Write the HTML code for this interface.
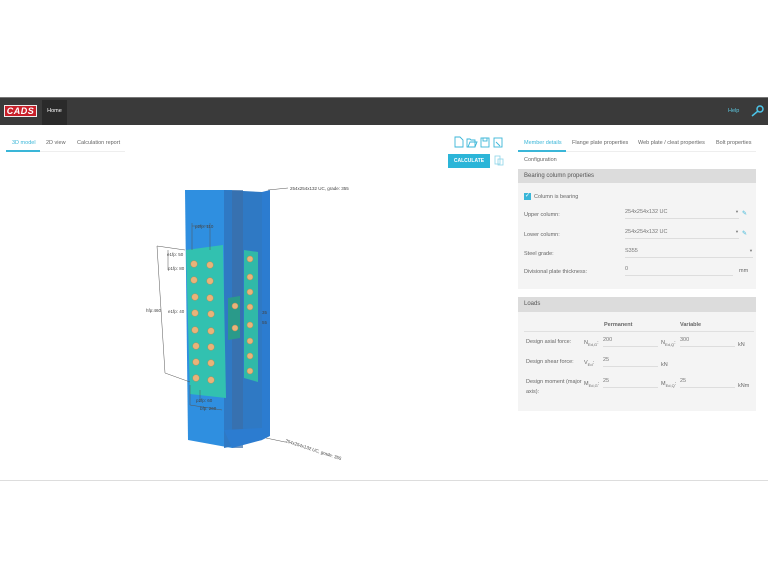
<!DOCTYPE html>
<html><head><meta charset="utf-8"><style>
*{margin:0;padding:0;box-sizing:border-box}
body{width:768px;height:578px;background:#fff;font-family:"Liberation Sans",sans-serif;position:relative;overflow:hidden;color:#555}
.a{position:absolute;white-space:nowrap}
.nav{position:absolute;left:0;top:97px;width:768px;height:28px;background:#3a3a3a;border-top:1px solid #777}
.t{font-size:5.5px;color:#666}
.inp{position:absolute;border-bottom:1px solid #ddd;font-size:5.5px;color:#777}
</style></head><body>
<div class="nav">
 <div class="a" style="left:4px;top:7px;width:33px;height:12px;background:#c8202a;border:1px solid #eee;color:#fff;font-weight:bold;font-style:italic;font-size:9px;line-height:10px;text-align:center;letter-spacing:0.5px">CADS</div>
 <div class="a" style="left:42px;top:2px;width:25px;height:25px;background:#2a2a2a;color:#fff;font-size:5.5px;line-height:22px;text-align:center">Home</div>
 <div class="a" style="left:728px;top:10px;color:#5cc8e0;font-size:5.5px">Help</div>
 <svg class="a" style="left:750px;top:7px" width="14" height="12"><circle cx="10" cy="4" r="3" fill="none" stroke="#4cc4e8" stroke-width="1.5"/><line x1="8" y1="6" x2="2" y2="11" stroke="#4cc4e8" stroke-width="1.5"/></svg>
</div>
<div class="a t" style="left:12px;top:140px;color:#3ab6d8">3D model</div>
<div class="a t" style="left:46px;top:140px">2D view</div>
<div class="a t" style="left:77px;top:140px">Calculation report</div>
<div class="a" style="left:6px;top:151px;width:119px;height:1px;background:#eee"></div>
<div class="a" style="left:6px;top:150px;width:34px;height:2px;background:#3ab6d8"></div>
<svg class="a" style="left:454px;top:136px" width="52" height="12" fill="none" stroke="#3ab6d8" stroke-width="0.9"><path d="M1 1h5l3 3v7H1z"/><path d="M13 3h3l1 1h4v7h-8z M14 11l2-5h7l-2 5"/><rect x="27" y="2" width="8" height="9"/><rect x="29" y="2" width="4" height="3"/><rect x="40" y="2" width="8" height="9"/><path d="M42 6l4 4"/></svg>
<div class="a" style="left:448px;top:154px;width:42px;height:14px;background:#2bb5d8;color:#fff;font-size:5px;font-weight:bold;line-height:14px;text-align:center">CALCULATE</div>
<svg class="a" style="left:494px;top:155px" width="10" height="11" fill="none" stroke="#8cd4e8" stroke-width="0.8"><rect x="1" y="1" width="5" height="8"/><rect x="4" y="4" width="5" height="6"/></svg>

<!-- 3D model -->
<svg class="a" style="left:130px;top:180px" width="250" height="290">
 <g transform="translate(-130,-180)">
 <polygon points="185,190 232,190 232,448 188,440" fill="#2f8fe0"/>
 <polygon points="224,190 262,192 262,440 224,448" fill="#2f79c4"/>
 <polygon points="232,190 243,190 243,448 232,448" fill="#3a6ea8" opacity="0.7"/>
 <polygon points="262,192 270,190 270,436 262,440" fill="#2c7cd0"/>
 <polygon points="224,430 262,428 262,440 232,448" fill="#2c7cd0"/>
 <polygon points="186,250 223,245 226,398 190,394" fill="#32c1b0"/>
 <polygon points="244,250 258,252 258,382 244,378" fill="#30b9a8"/>
 <polygon points="228,298 240,296 240,338 228,340" fill="#2a9a8a"/>
 <g fill="#e8b37a" stroke="#c68a50" stroke-width="0.5">
 <circle cx="194" cy="264" r="3.3"/><circle cx="210" cy="265" r="3.3"/>
 <circle cx="194" cy="280" r="3.3"/><circle cx="210" cy="281" r="3.3"/>
 <circle cx="195" cy="297" r="3.3"/><circle cx="210" cy="298" r="3.3"/>
 <circle cx="195" cy="313" r="3.3"/><circle cx="211" cy="314" r="3.3"/>
 <circle cx="195" cy="330" r="3.3"/><circle cx="211" cy="331" r="3.3"/>
 <circle cx="196" cy="346" r="3.3"/><circle cx="211" cy="347" r="3.3"/>
 <circle cx="196" cy="362" r="3.3"/><circle cx="211" cy="363" r="3.3"/>
 <circle cx="196" cy="378" r="3.3"/><circle cx="211" cy="380" r="3.3"/>
 <circle cx="250" cy="259" r="3"/><circle cx="250" cy="277" r="3"/><circle cx="250" cy="292" r="3"/><circle cx="250" cy="307" r="3"/>
 <circle cx="250" cy="325" r="3"/><circle cx="250" cy="341" r="3"/><circle cx="250" cy="356" r="3"/><circle cx="250" cy="371" r="3"/>
 <circle cx="235" cy="306" r="3"/><circle cx="235" cy="328" r="3"/>
 </g>
 <g stroke="#555" stroke-width="0.5" fill="none">
 <path d="M157 246L185 250M157 246L165 373L190 382M168 250V270M192 223V250M210 223V250M192 226H210"/>
 <path d="M190 385V405L222 410M200 390V402M268 190L288 188M266 438L285 442"/>
 </g>
 <g font-size="4.5" fill="#444" font-family="Liberation Sans">
 <text x="290" y="190">254x254x132 UC, grade: 355</text>
 <text x="195" y="228">p2fp: 110</text>
 <text x="167" y="256">e1fp: 50</text>
 <text x="168" y="270">p1fp: 80</text>
 <text x="146" y="312">hfp:460</text>
 <text x="168" y="313">e1fp: 40</text>
 <text x="196" y="402">p2fp: 60</text>
 <text x="200" y="410">bfp: 260</text>
 <text x="262" y="314">35</text>
 <text x="262" y="324">55</text>
 <text x="285" y="442" transform="rotate(18 285 442)">254x254x132 UC, grade: 355</text>
 </g>
 </g>
</svg>

<!-- right panel -->
<div class="a t" style="left:524px;top:140px;color:#3ab6d8">Member details</div>
<div class="a t" style="left:572px;top:140px">Flange plate properties</div>
<div class="a t" style="left:638px;top:140px">Web plate / cleat properties</div>
<div class="a t" style="left:716px;top:140px">Bolt properties</div>
<div class="a" style="left:518px;top:151px;width:238px;height:1px;background:#eee"></div>
<div class="a" style="left:518px;top:150px;width:48px;height:2px;background:#3ab6d8"></div>
<div class="a t" style="left:524px;top:157px">Configuration</div>

<div class="a" style="left:518px;top:169px;width:238px;height:120px;background:#f4f4f4"></div>
<div class="a" style="left:518px;top:169px;width:238px;height:14px;background:#dcdcdc;font-size:6px;color:#555;padding:4px 6px">Bearing column properties</div>
<div class="a" style="left:524px;top:193px;width:7px;height:7px;background:#3ab6d8;color:#fff;font-size:6px;line-height:7px;text-align:center">✓</div>
<div class="a t" style="left:534px;top:194px">Column is bearing</div>
<div class="a t" style="left:524px;top:212px">Upper column:</div>
<div class="inp" style="left:625px;top:209px;width:114px;height:10px">254x254x132 UC<span style="float:right;font-size:4px">▼</span></div>
<div class="a" style="left:742px;top:210px;color:#3ab6d8;font-size:6px">✎</div>
<div class="a t" style="left:524px;top:232px">Lower column:</div>
<div class="inp" style="left:625px;top:229px;width:114px;height:10px">254x254x132 UC<span style="float:right;font-size:4px">▼</span></div>
<div class="a" style="left:742px;top:230px;color:#3ab6d8;font-size:6px">✎</div>
<div class="a t" style="left:524px;top:251px">Steel grade:</div>
<div class="inp" style="left:625px;top:248px;width:128px;height:10px">S355<span style="float:right;font-size:4px">▼</span></div>
<div class="a t" style="left:524px;top:269px">Divisional plate thickness:</div>
<div class="inp" style="left:625px;top:266px;width:108px;height:10px">0</div>
<div class="a t" style="left:739px;top:268px">mm</div>

<div class="a" style="left:518px;top:297px;width:238px;height:114px;background:#f4f4f4"></div>
<div class="a" style="left:518px;top:297px;width:238px;height:15px;background:#dcdcdc;font-size:6px;color:#555;padding:4px 6px">Loads</div>
<div class="a t" style="left:604px;top:322px;font-weight:bold">Permanent</div>
<div class="a t" style="left:680px;top:322px;font-weight:bold">Variable</div>
<div class="a" style="left:524px;top:331px;width:230px;height:1px;background:#e0e0e0"></div>
<div class="a t" style="left:526px;top:339px">Design axial force:</div>
<div class="a t" style="left:584px;top:340px">N<sub style="font-size:4px">Ed,G</sub>:</div>
<div class="inp" style="left:603px;top:337px;width:55px;height:10px">200</div>
<div class="a t" style="left:661px;top:340px">N<sub style="font-size:4px">Ed,Q</sub>:</div>
<div class="inp" style="left:680px;top:337px;width:55px;height:10px">300</div>
<div class="a t" style="left:738px;top:342px">kN</div>
<div class="a t" style="left:526px;top:359px">Design shear force:</div>
<div class="a t" style="left:584px;top:360px">V<sub style="font-size:4px">Ed</sub>:</div>
<div class="inp" style="left:603px;top:357px;width:55px;height:10px">25</div>
<div class="a t" style="left:661px;top:362px">kN</div>
<div class="a t" style="left:526px;top:377px;line-height:10px">Design moment (major<br>axis):</div>
<div class="a t" style="left:584px;top:381px">M<sub style="font-size:4px">Ed,G</sub>:</div>
<div class="inp" style="left:603px;top:378px;width:55px;height:10px">25</div>
<div class="a t" style="left:661px;top:381px">M<sub style="font-size:4px">Ed,Q</sub>:</div>
<div class="inp" style="left:680px;top:378px;width:55px;height:10px">25</div>
<div class="a t" style="left:738px;top:383px">kNm</div>

<div class="a" style="left:0;top:480px;width:768px;height:1px;background:#ddd"></div>
</body></html>
